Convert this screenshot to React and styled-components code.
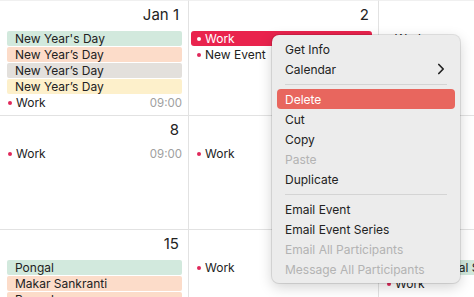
import React from "react";
import styled, { createGlobalStyle } from "styled-components";

const GlobalStyle = createGlobalStyle`
  html, body {
    margin: 0;
    padding: 0;
    background: #fff;
  }
  body {
    font-family: Inter, "Noto Sans", sans-serif;
    -webkit-font-smoothing: antialiased;
  }
`;

const holidayColors = {
  green: "#d2e9dd",
  peach: "#fcdcc9",
  grey: "#e3e0dc",
  yellow: "#fdf0cb",
};

const weeks = [
  [
    {
      label: "Jan 1",
      events: [
        { type: "holiday", color: "green", title: "New Year's Day" },
        { type: "holiday", color: "peach", title: "New Year’s Day" },
        { type: "holiday", color: "grey", title: "New Year’s Day" },
        { type: "holiday", color: "yellow", title: "New Year’s Day" },
        { type: "timed", title: "Work", time: "09:00" },
      ],
    },
    {
      label: "2",
      events: [
        { type: "selected", title: "Work" },
        { type: "timed", title: "New Event" },
      ],
    },
    { label: "", events: [{ type: "timed", title: "Work" }] },
  ],
  [
    { label: "8", events: [{ type: "timed", title: "Work", time: "09:00" }] },
    { label: "", events: [{ type: "timed", title: "Work" }] },
    { label: "", events: [] },
  ],
  [
    {
      label: "15",
      events: [
        { type: "holiday", color: "green", title: "Pongal" },
        { type: "holiday", color: "peach", title: "Makar Sankranti" },
        { type: "holiday", color: "peach", title: "Pongal" },
      ],
    },
    { label: "", events: [{ type: "timed", title: "Work" }] },
    {
      label: "",
      events: [
        { type: "holiday", color: "green", title: "Mattu Pongal Sankranti" },
        { type: "timed", title: "Work" },
      ],
    },
  ],
];

const menu = [
  { label: "Get Info" },
  { label: "Calendar", submenu: true },
  { sep: true },
  { label: "Delete", active: true },
  { label: "Cut" },
  { label: "Copy" },
  { label: "Paste", disabled: true },
  { label: "Duplicate" },
  { sep: true },
  { label: "Email Event" },
  { label: "Email Event Series" },
  { label: "Email All Participants", disabled: true },
  { label: "Message All Participants", disabled: true },
];

const Event = ({ ev }) => {
  if (ev.type === "holiday") {
    return <HolidayBar color={holidayColors[ev.color]}>{ev.title}</HolidayBar>;
  }
  const selected = ev.type === "selected";
  return (
    <TimedRow selected={selected}>
      <Dot selected={selected} />
      <EventTitle>{ev.title}</EventTitle>
      {ev.time && <Time>{ev.time}</Time>}
    </TimedRow>
  );
};

const App = () => {
  return (
    <>
      <GlobalStyle />
      <Page>
        <Grid>
          {weeks.map((week, wi) =>
            week.map((day, di) => (
              <Cell key={`${wi}-${di}`} first={wi === 0}>
                <DayLabel>{day.label}</DayLabel>
                <Events>
                  {day.events.map((ev, i) => (
                    <Event key={i} ev={ev} />
                  ))}
                </Events>
              </Cell>
            ))
          )}
        </Grid>
        <Menu>
          {menu.map((item, i) =>
            item.sep ? (
              <Separator key={i} />
            ) : (
              <MenuItem key={i} active={item.active} disabled={item.disabled}>
                <span>{item.label}</span>
                {item.submenu && (
                  <svg width="8" height="12" viewBox="0 0 8 12">
                    <path
                      d="M1.8 1.5 L6.2 6 L1.8 10.5"
                      fill="none"
                      stroke="#222"
                      strokeWidth="1.7"
                      strokeLinecap="round"
                      strokeLinejoin="round"
                    />
                  </svg>
                )}
              </MenuItem>
            )
          )}
        </Menu>
      </Page>
    </>
  );
};

const Page = styled.div`
  position: relative;
  width: 474px;
  height: 297px;
  overflow: hidden;
  background: #fff;
`;

const Grid = styled.div`
  display: grid;
  grid-template-columns: 189px 190px 190px;
  grid-template-rows: 115px 114px 114px;
`;

const Cell = styled.div`
  border-top: 1px solid ${(p) => (p.first ? "#f0f0f0" : "#e2e2e2")};
  border-right: 1px solid #e2e2e2;
  display: flex;
  flex-direction: column;
  padding: 2px 6px 0 7px;
  box-sizing: border-box;
  overflow: hidden;
`;

const DayLabel = styled.div`
  height: 26px;
  line-height: 24px;
  text-align: right;
  font-size: 15px;
  color: #222;
  padding-right: 3px;
`;

const Events = styled.div`
  display: flex;
  flex-direction: column;
  gap: 1px;
  padding-top: 2px;
`;

const HolidayBar = styled.div`
  height: 15px;
  line-height: 15px;
  background: ${(p) => p.color};
  border-radius: 2px;
  padding-left: 8px;
  font-size: 12px;
  color: #222;
  white-space: nowrap;
  overflow: hidden;
`;

const TimedRow = styled.div`
  display: flex;
  align-items: center;
  height: 15px;
  border-radius: 3px;
  margin-left: ${(p) => (p.selected ? "-5px" : "0")};
  padding-left: ${(p) => (p.selected ? "6px" : "1px")};
  font-size: 12px;
  background: ${(p) => (p.selected ? "#e9234d" : "transparent")};
  color: ${(p) => (p.selected ? "#fff" : "#222")};
`;

const Dot = styled.span`
  width: 4px;
  height: 4px;
  border-radius: 50%;
  background: ${(p) => (p.selected ? "#fff" : "#e0285a")};
  margin-right: 4px;
  flex-shrink: 0;
`;

const EventTitle = styled.span`
  flex: 1;
  white-space: nowrap;
`;

const Time = styled.span`
  font-size: 11.5px;
  color: #a0a0a0;
`;

const Menu = styled.div`
  position: absolute;
  left: 272px;
  top: 35px;
  width: 188px;
  padding: 4px 5px;
  box-sizing: border-box;
  background: #ececec;
  border-radius: 7px;
  box-shadow: 0 0 0 1px rgba(0, 0, 0, 0.1), 0 4px 14px rgba(0, 0, 0, 0.18);
  font-size: 12px;
`;

const MenuItem = styled.div`
  display: flex;
  align-items: center;
  justify-content: space-between;
  height: 20px;
  padding: 0 10px 0 8px;
  border-radius: 4px;
  background: ${(p) => (p.active ? "#e8665e" : "transparent")};
  color: ${(p) => (p.active ? "#fff" : p.disabled ? "#b3b3b3" : "#222")};
`;

const Separator = styled.div`
  height: 1px;
  background: #d4d4d4;
  margin: 5px 8px 4px;
`;

export default App;
